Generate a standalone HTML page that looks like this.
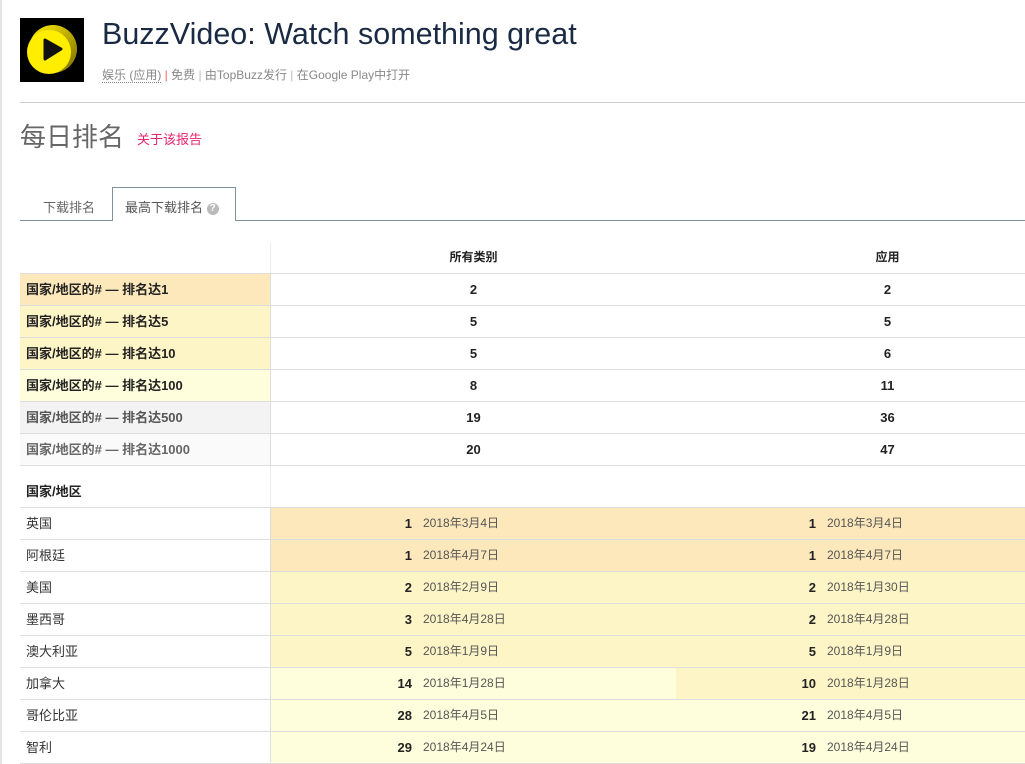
<!DOCTYPE html>
<html><head><meta charset="utf-8"><style>
*{margin:0;padding:0;box-sizing:border-box}
body{width:1025px;height:764px;overflow:hidden;background:#fff;font-family:"Liberation Sans","Noto Sans CJK SC",sans-serif;position:relative;color:#333}
.a{position:absolute}
.r{position:absolute;left:20px;width:1005px;height:32px;border-bottom:1px solid #ddd;font-size:13px}
.r>div{position:absolute;top:0;height:31px;line-height:31px}
.c1{left:0;width:251px;padding-left:6px;border-right:1px solid #ddd}
.c2{left:251px;width:405px}
.c3{left:656px;width:349px}
.t3{padding-left:74px}
.b{font-weight:bold;color:#222}
.n{position:absolute;right:0;text-align:right;font-weight:bold;color:#222}
.d{position:absolute;color:#555;font-size:12px}
</style></head><body>
<div class="a" style="left:0;top:0;width:2px;height:764px;background:#e4e4e4"></div>
<svg class="a" style="left:20px;top:18px" width="64" height="64" viewBox="0 0 64 64">
<rect width="64" height="64" fill="#000"/>
<defs><linearGradient id="g" x1="0" y1="0" x2="1" y2="1"><stop offset="0" stop-color="#fff000"/><stop offset="1" stop-color="#7a6a00"/></linearGradient></defs>
<circle cx="33" cy="31" r="24" fill="url(#g)"/>
<circle cx="29" cy="34" r="22" fill="#ffee00"/>
<path d="M25 22 L41 31 L25 41 Z" fill="#111" stroke="#111" stroke-width="3" stroke-linejoin="round"/>
</svg>
<div class="a" style="left:102px;top:17px;font-size:30.5px;color:#1a2a44">BuzzVideo: Watch something great</div>
<div class="a" style="left:102px;top:66px;font-size:12px;color:#888"><span style="border-bottom:1px dotted #888">娱乐 (应用)</span> <span style="color:#e66">|</span> 免费 <span style="color:#bbb">|</span> 由TopBuzz发行 <span style="color:#bbb">|</span> 在Google Play中打开</div>
<div class="a" style="left:20px;top:102px;width:1005px;height:1px;background:#ccc"></div>
<div class="a" style="left:20px;top:117px;font-size:26px;color:#666">每日排名</div>
<div class="a" style="left:137px;top:129px;font-size:13px;color:#e8256b">关于该报告</div>
<div class="a" style="left:20px;top:220px;width:1005px;height:1px;background:#8090a0"></div>
<div class="a" style="left:43px;top:197px;font-size:13px;color:#666">下载排名</div>
<div class="a" style="left:112px;top:187px;width:124px;height:34px;border:1px solid #8090a0;border-bottom:none;background:#fff"></div>
<div class="a" style="left:125px;top:197px;font-size:13px;color:#555">最高下载排名 <span style="display:inline-block;width:12px;height:12px;border-radius:50%;background:#bbb;color:#fff;font-size:10px;line-height:12px;text-align:center;font-weight:bold;vertical-align:1px">?</span></div>

<div class="r" style="top:242px"><div class="c1" style="border-right:1px solid #eee"></div><div class="c2 b" style="text-align:center;font-size:12px">所有类别</div><div class="c3 b t3" style="text-align:center;font-size:12px">应用</div></div>

<div class="r" style="top:274px"><div class="c1 b" style="background:#fde8bb">国家/地区的# — 排名达1</div><div class="c2 b" style="text-align:center">2</div><div class="c3 b t3" style="text-align:center">2</div></div>
<div class="r" style="top:306px"><div class="c1 b" style="background:#fef5c7">国家/地区的# — 排名达5</div><div class="c2 b" style="text-align:center">5</div><div class="c3 b t3" style="text-align:center">5</div></div>
<div class="r" style="top:338px"><div class="c1 b" style="background:#fef5c7">国家/地区的# — 排名达10</div><div class="c2 b" style="text-align:center">5</div><div class="c3 b t3" style="text-align:center">6</div></div>
<div class="r" style="top:370px"><div class="c1 b" style="background:#fefedc">国家/地区的# — 排名达100</div><div class="c2 b" style="text-align:center">8</div><div class="c3 b t3" style="text-align:center">11</div></div>
<div class="r" style="top:402px"><div class="c1" style="background:#f3f3f3;font-weight:bold;color:#555">国家/地区的# — 排名达500</div><div class="c2 b" style="text-align:center">19</div><div class="c3 b t3" style="text-align:center">36</div></div>
<div class="r" style="top:434px"><div class="c1" style="background:#fafafa;font-weight:bold;color:#666">国家/地区的# — 排名达1000</div><div class="c2 b" style="text-align:center">20</div><div class="c3 b t3" style="text-align:center">47</div></div>
<div class="r" style="top:466px;height:42px"><div class="c1 b" style="height:41px;line-height:52px;border-right:1px solid #eee">国家/地区</div></div>

<div class="r" style="top:508px"><div class="c1">英国</div><div class="c2" style="background:#fde8bb"><span class="n" style="right:264px">1</span><span class="d" style="left:152px">2018年3月4日</span></div><div class="c3" style="background:#fde8bb"><span class="n" style="right:209px">1</span><span class="d" style="left:151px">2018年3月4日</span></div></div>
<div class="r" style="top:540px"><div class="c1">阿根廷</div><div class="c2" style="background:#fde8bb"><span class="n" style="right:264px">1</span><span class="d" style="left:152px">2018年4月7日</span></div><div class="c3" style="background:#fde8bb"><span class="n" style="right:209px">1</span><span class="d" style="left:151px">2018年4月7日</span></div></div>
<div class="r" style="top:572px"><div class="c1">美国</div><div class="c2" style="background:#fef5c7"><span class="n" style="right:264px">2</span><span class="d" style="left:152px">2018年2月9日</span></div><div class="c3" style="background:#fef5c7"><span class="n" style="right:209px">2</span><span class="d" style="left:151px">2018年1月30日</span></div></div>
<div class="r" style="top:604px"><div class="c1">墨西哥</div><div class="c2" style="background:#fef5c7"><span class="n" style="right:264px">3</span><span class="d" style="left:152px">2018年4月28日</span></div><div class="c3" style="background:#fef5c7"><span class="n" style="right:209px">2</span><span class="d" style="left:151px">2018年4月28日</span></div></div>
<div class="r" style="top:636px"><div class="c1">澳大利亚</div><div class="c2" style="background:#fef5c7"><span class="n" style="right:264px">5</span><span class="d" style="left:152px">2018年1月9日</span></div><div class="c3" style="background:#fef5c7"><span class="n" style="right:209px">5</span><span class="d" style="left:151px">2018年1月9日</span></div></div>
<div class="r" style="top:668px"><div class="c1">加拿大</div><div class="c2" style="background:#fefedc"><span class="n" style="right:264px">14</span><span class="d" style="left:152px">2018年1月28日</span></div><div class="c3" style="background:#fef5c7"><span class="n" style="right:209px">10</span><span class="d" style="left:151px">2018年1月28日</span></div></div>
<div class="r" style="top:700px"><div class="c1">哥伦比亚</div><div class="c2" style="background:#fefedc"><span class="n" style="right:264px">28</span><span class="d" style="left:152px">2018年4月5日</span></div><div class="c3" style="background:#fefedc"><span class="n" style="right:209px">21</span><span class="d" style="left:151px">2018年4月5日</span></div></div>
<div class="r" style="top:732px"><div class="c1">智利</div><div class="c2" style="background:#fefedc"><span class="n" style="right:264px">29</span><span class="d" style="left:152px">2018年4月24日</span></div><div class="c3" style="background:#fefedc"><span class="n" style="right:209px">19</span><span class="d" style="left:151px">2018年4月24日</span></div></div>
</body></html>
